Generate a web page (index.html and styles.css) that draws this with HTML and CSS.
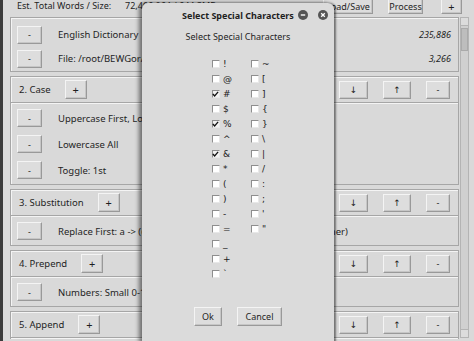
FILE: index.html
```html
<!DOCTYPE html>
<html lang="en">
  <head>
    <meta charset="UTF-8" />
    <meta name="viewport" content="width=device-width, initial-scale=1.0" />
    <title>BEWGor - Select Special Characters</title>
    <link rel="stylesheet" href="styles.css">
  </head>
  <body>
    <div class="screen">
      <div class="edge"></div>
      <div class="app">
        <!-- top status row -->
        <div class="topbar">
          <span class="stat-label">Est. Total Words / Size:</span>
          <span class="stat-value">72,466,064 / 644.3MB</span>
          <div class="top-btns">
            <button class="btn load">Load/Save</button>
            <button class="btn process">Process</button>
            <button class="btn add">+</button>
          </div>
        </div>
        <div class="main">
          <div class="sections">
            <!-- 1. wordlists -->
            <div class="section first">
              <div class="items">
                <div class="item"><button class="btn minus">-</button><span class="item-name">English Dictionary</span><span class="count">235,886</span></div>
                <div class="item"><button class="btn minus">-</button><span class="item-name">File: /root/BEWGor/hashes/wordlist.txt</span><span class="count">3,266</span></div>
              </div>
            </div>
            <!-- 2. case -->
            <div class="section">
              <div class="sec-head">
                <span class="sec-title">2. Case</span>
                <button class="btn plus">+</button>
                <div class="move-btns">
                  <button class="btn down">↓</button>
                  <button class="btn up">↑</button>
                  <button class="btn del">-</button>
                </div>
              </div>
              <div class="items">
                <div class="item"><button class="btn minus">-</button><span class="item-name">Uppercase First, Lowercase Rest</span></div>
                <div class="item"><button class="btn minus">-</button><span class="item-name">Lowercase All</span></div>
                <div class="item"><button class="btn minus">-</button><span class="item-name">Toggle: 1st</span></div>
              </div>
            </div>
            <!-- 3. substitution -->
            <div class="section">
              <div class="sec-head">
                <span class="sec-title">3. Substitution</span>
                <button class="btn plus">+</button>
                <div class="move-btns">
                  <button class="btn down">↓</button>
                  <button class="btn up">↑</button>
                  <button class="btn del">-</button>
                </div>
              </div>
              <div class="items">
                <div class="item"><button class="btn minus">-</button><span class="item-name">Replace First: a -&gt; (@, 4), e -&gt; (3), i -&gt; (1), o -&gt; (0), s -&gt; ($) (Together)</span></div>
              </div>
            </div>
            <!-- 4. prepend -->
            <div class="section">
              <div class="sec-head">
                <span class="sec-title">4. Prepend</span>
                <button class="btn plus">+</button>
                <div class="move-btns">
                  <button class="btn down">↓</button>
                  <button class="btn up">↑</button>
                  <button class="btn del">-</button>
                </div>
              </div>
              <div class="items">
                <div class="item"><button class="btn minus">-</button><span class="item-name">Numbers: Small 0-100</span></div>
              </div>
            </div>
            <!-- 5. append -->
            <div class="section">
              <div class="sec-head">
                <span class="sec-title">5. Append</span>
                <button class="btn plus">+</button>
                <div class="move-btns">
                  <button class="btn down">↓</button>
                  <button class="btn up">↑</button>
                  <button class="btn del">-</button>
                </div>
              </div>
            </div>
          </div>
          <div class="scrollbar">
            <div class="arrow top"></div>
            <div class="thumb"></div>
            <div class="arrow bottom"></div>
          </div>
        </div>
      </div>

      <!-- dialog window -->
      <div class="dialog">
        <div class="dlg-title">
          <span></span>
          <span class="dlg-name">Select Special Characters</span>
          <div class="wm-btns">
            <span class="wm-btn">
              <svg width="10" height="10" viewBox="0 0 10 10"><line x1="2.8" y1="5" x2="7.2" y2="5" stroke="#fff" stroke-width="1.4"/></svg>
            </span>
            <span class="wm-btn">
              <svg width="10" height="10" viewBox="0 0 10 10"><path d="M3.2 3.2 L6.8 6.8 M6.8 3.2 L3.2 6.8" stroke="#fff" stroke-width="1.3"/></svg>
            </span>
          </div>
        </div>
        <p class="dlg-label">Select Special Characters</p>
        <div class="checks">
          <div class="col">
            <label class="chk"><span class="box"></span>!</label>
            <label class="chk"><span class="box"></span>@</label>
            <label class="chk"><span class="box on"><svg width="8" height="8" viewBox="0 0 8 8"><path d="M1 4 L3 6.2 L7 1.5" fill="none" stroke="#111" stroke-width="1.5"/></svg></span>#</label>
            <label class="chk"><span class="box"></span>$</label>
            <label class="chk"><span class="box on"><svg width="8" height="8" viewBox="0 0 8 8"><path d="M1 4 L3 6.2 L7 1.5" fill="none" stroke="#111" stroke-width="1.5"/></svg></span>%</label>
            <label class="chk"><span class="box"></span>^</label>
            <label class="chk"><span class="box on"><svg width="8" height="8" viewBox="0 0 8 8"><path d="M1 4 L3 6.2 L7 1.5" fill="none" stroke="#111" stroke-width="1.5"/></svg></span>&amp;</label>
            <label class="chk"><span class="box"></span>*</label>
            <label class="chk"><span class="box"></span>(</label>
            <label class="chk"><span class="box"></span>)</label>
            <label class="chk"><span class="box"></span>-</label>
            <label class="chk"><span class="box"></span>=</label>
            <label class="chk"><span class="box"></span>_</label>
            <label class="chk"><span class="box"></span>+</label>
            <label class="chk"><span class="box"></span>`</label>
          </div>
          <div class="col">
            <label class="chk"><span class="box"></span>~</label>
            <label class="chk"><span class="box"></span>[</label>
            <label class="chk"><span class="box"></span>]</label>
            <label class="chk"><span class="box"></span>{</label>
            <label class="chk"><span class="box"></span>}</label>
            <label class="chk"><span class="box"></span>\</label>
            <label class="chk"><span class="box"></span>|</label>
            <label class="chk"><span class="box"></span>/</label>
            <label class="chk"><span class="box"></span>:</label>
            <label class="chk"><span class="box"></span>;</label>
            <label class="chk"><span class="box"></span>'</label>
            <label class="chk"><span class="box"></span>"</label>
          </div>
        </div>
        <div class="dlg-foot">
          <button class="btn ok">Ok</button>
          <button class="btn cancel">Cancel</button>
        </div>
      </div>
    </div>
  </body>
</html>
```

FILE: styles.css
```css
:root {
  --bg-color: #d9d9d9;
  --btn-color: #dddddd;
  --line-dark: #a6a6a6;
  --line-light: #f4f4f4;
  --text-color: #1f1f1f;
  --font-family: "Noto Sans", "DejaVu Sans", sans-serif;
}
* {
  margin: 0;
  padding: 0;
  box-sizing: border-box;
}
body {
  background-color: var(--bg-color);
  font-family: var(--font-family);
  font-size: 9px;
  color: var(--text-color);
  overflow: hidden;
}
.screen {
  position: relative;
  width: 474px;
  height: 341px;
  display: flex;
  overflow: hidden;
}
.edge {
  width: 3px;
  background-color: #3a3a3a;
}
.app {
  flex: 1;
  display: flex;
  flex-direction: column;
  padding-left: 7px;
}
.btn {
  font-family: var(--font-family);
  font-size: 9px;
  color: var(--text-color);
  background-color: var(--btn-color);
  border: 1px solid;
  border-color: var(--line-light) #999 #999 var(--line-light);
  box-shadow: inset -1px -1px 0 #c6c6c6;
  display: flex;
  align-items: center;
  justify-content: center;
}

/* top row */
.topbar {
  height: 17px;
  display: flex;
  align-items: flex-start;
  padding-left: 7px;
  overflow: hidden;
}
.stat-label,
.stat-value {
  line-height: 11px;
}
.stat-label {
  width: 108px;
}
.top-btns {
  margin-left: auto;
  margin-top: -5px;
  margin-right: 12px;
  display: flex;
  gap: 15px;
}
.top-btns .btn {
  height: 19px;
  padding-top: 3px;
}
.load {
  width: 50px;
}
.process {
  width: 35px;
  margin-right: 3px;
}
.add {
  width: 21px;
  font-size: 11px;
}

/* sections */
.main {
  flex: 1;
  display: flex;
}
.sections {
  width: 449px;
  display: flex;
  flex-direction: column;
  gap: 4px;
}
.section {
  border: 1px solid var(--line-dark);
  box-shadow: inset 1px 1px 0 var(--line-light);
}
.sec-head {
  height: 26px;
  display: flex;
  align-items: center;
  padding: 0 8px;
  border-bottom: 1px solid var(--line-dark);
  box-shadow: 0 1px 0 var(--line-light);
}
.sec-title {
  font-size: 9.5px;
}
.plus {
  width: 22px;
  height: 19px;
  margin-left: 14px;
  font-size: 11px;
}
.move-btns {
  margin-left: auto;
  display: flex;
  gap: 15px;
}
.move-btns .btn {
  height: 18px;
}
.down {
  width: 29px;
}
.up {
  width: 28px;
}
.del {
  width: 24px;
}
.items {
  display: flex;
  flex-direction: column;
  gap: 8px;
  padding: 6px 7px 5px 6px;
}
.item {
  height: 18px;
  display: flex;
  align-items: center;
  white-space: nowrap;
}
.minus {
  width: 25px;
  height: 18px;
}
.item-name {
  margin-left: 16px;
  font-size: 9.5px;
}
.count {
  margin-left: auto;
  font-style: italic;
}
.first .items {
  padding-top: 8px;
  gap: 7px;
  padding-bottom: 4px;
}
.first .item {
  height: 17px;
}

/* scrollbar */
.scrollbar {
  width: 9px;
  height: 321px;
  margin-left: 1px;
  background-color: #d0d0d0;
  border: 1px solid #b4b4b4;
  display: flex;
  flex-direction: column;
}
.arrow {
  height: 8px;
  background-color: #dcdcdc;
  border-bottom: 1px solid #b4b4b4;
}
.arrow.bottom {
  margin-top: auto;
  border-bottom: none;
  border-top: 1px solid #b4b4b4;
}
.thumb {
  height: 23px;
  margin-top: 2px;
  background-color: #bdbdbd;
  border: 1px solid #aaa;
}

/* dialog */
.dialog {
  position: absolute;
  left: 142px;
  top: 3px;
  width: 192px;
  height: 340px;
  background-color: #dbdbdb;
  border-radius: 6px 6px 0 0;
  box-shadow: -3px 0 4px rgba(0, 0, 0, 0.5), 2px 0 2px rgba(0, 0, 0, 0.45);
  display: flex;
  flex-direction: column;
}
.dlg-title {
  height: 24px;
  display: grid;
  grid-template-columns: 1fr auto 1fr;
  align-items: center;
}
.dlg-name {
  font-weight: bold;
  font-size: 9px;
}
.wm-btns {
  justify-self: end;
  display: flex;
  gap: 10px;
  padding-right: 6px;
}
.wm-btn {
  width: 10px;
  height: 10px;
  border-radius: 50%;
  background-color: #555;
  display: flex;
}
.dlg-label {
  margin-top: 4px;
  line-height: 12px;
  text-align: center;
}
.checks {
  margin-top: 13px;
  padding-left: 70px;
  display: flex;
}
.col {
  width: 39px;
  display: flex;
  flex-direction: column;
}
.chk {
  height: 15px;
  display: flex;
  align-items: center;
  font-family: "DejaVu Sans", sans-serif;
  font-size: 9px;
  color: #1a1a1a;
}
.box {
  width: 8px;
  height: 8px;
  margin-right: 3px;
  background-color: #fff;
  border: 1px solid;
  border-color: #8e8e8e #e8e8e8 #e8e8e8 #8e8e8e;
  display: flex;
}
.box.on {
  background-color: #f2f2f2;
}
.box svg {
  margin: -1px 0 0 -1px;
}
.dlg-foot {
  margin-top: 26px;
  display: flex;
  justify-content: center;
  gap: 15px;
}
.dlg-foot .btn {
  height: 19px;
}
.ok {
  width: 28px;
}
.cancel {
  width: 45px;
}
```
